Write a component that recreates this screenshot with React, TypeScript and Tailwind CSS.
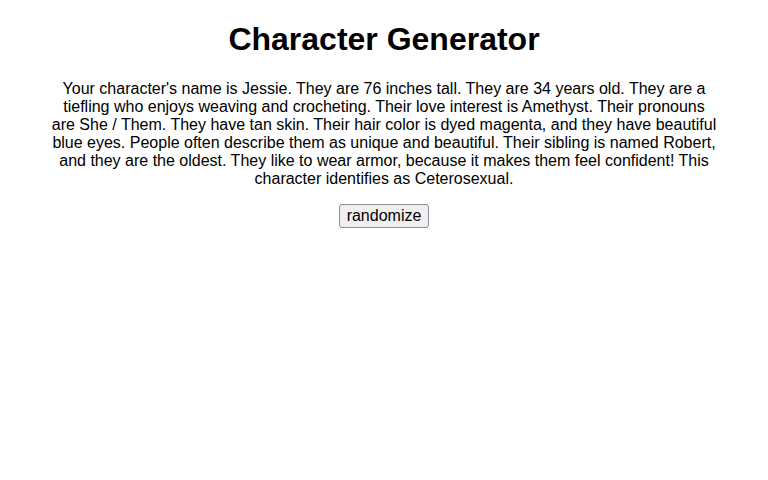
export default function App() {
  return (
    <div
      className="min-h-[480px] bg-white text-black px-[51px] text-center"
      style={{ fontFamily: '"Liberation Sans", Arial, sans-serif' }}
    >
      <h1 className="pt-[21px] mb-[22px] text-[32px] leading-[37px] font-bold">
        Character Generator
      </h1>
      <p className="text-[16px] leading-[18px] mb-[16px]">
        Your character's name is Jessie. They are 76 inches tall. They are 34 years old. They are a
        tiefling who enjoys weaving and crocheting. Their love interest is Amethyst. Their pronouns
        are She / Them. They have tan skin. Their hair color is dyed magenta, and they have beautiful
        blue eyes. People often describe them as unique and beautiful. Their sibling is named Robert,
        and they are the oldest. They like to wear armor, because it makes them feel confident! This
        character identifies as Ceterosexual.
      </p>
      <button
        type="button"
        className="px-[7px] py-[2px] text-[16px] leading-[18px] bg-[#efefef] border border-[#8f8f8f] rounded-[3px] hover:bg-[#e5e5e5]"
      >
        randomize
      </button>
    </div>
  );
}
